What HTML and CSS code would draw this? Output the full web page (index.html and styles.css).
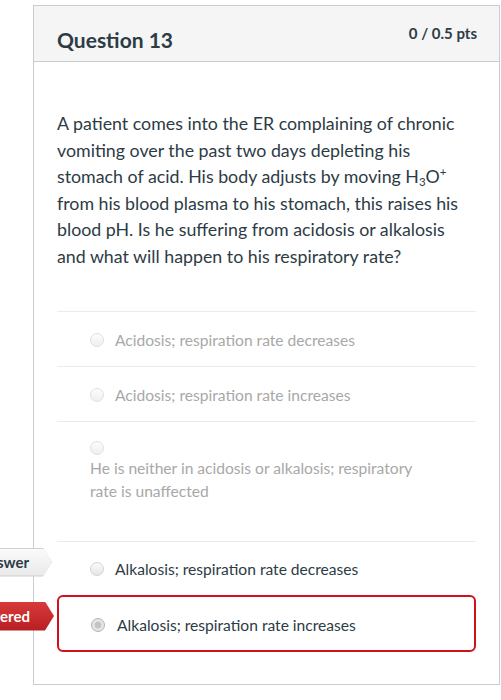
FILE: index.html
```html
<!DOCTYPE html>
<html lang="en">
  <head>
    <meta charset="UTF-8" />
    <meta name="viewport" content="width=device-width, initial-scale=1.0" />
    <title>Question 13</title>
    <link rel="stylesheet" href="styles.css">
  </head>
  <body>
    <div class="page">
      <div class="card">
        <div class="header">
          <h2 class="title">Question 13</h2>
          <div class="points">0 / 0.5 pts</div>
        </div>
        <div class="body">
          <p class="question">
            A patient comes into the ER complaining of chronic vomiting over the past two days depleting his
            stomach of acid. His body adjusts by moving H<sub>3</sub>O<sup>+</sup> from his blood plasma to his
            stomach, this raises his blood pH. Is he suffering from acidosis or alkalosis and what will happen
            to his respiratory rate?
          </p>
          <div class="answers">
            <div class="answer muted">
              <span class="radio"></span>
              <span class="text">Acidosis; respiration rate decreases</span>
            </div>
            <div class="answer muted">
              <span class="radio"></span>
              <span class="text">Acidosis; respiration rate increases</span>
            </div>
            <div class="answer muted stacked">
              <span class="radio"></span>
              <span class="text">He is neither in acidosis or alkalosis; respiratory rate is unaffected</span>
            </div>
            <div class="answer correct">
              <span class="tag tag-grey"><span>Correct Answer</span></span>
              <span class="radio"></span>
              <span class="text">Alkalosis; respiration rate decreases</span>
            </div>
            <div class="answer chosen">
              <span class="tag tag-red"><span>You Answered</span></span>
              <span class="radio checked"></span>
              <span class="text">Alkalosis; respiration rate increases</span>
            </div>
          </div>
        </div>
      </div>
    </div>
  </body>
</html>
```

FILE: styles.css
```css
* {
  padding: 0;
  margin: 0;
  box-sizing: border-box;
}
html,
body {
  width: 100%;
  height: 100%;
  overflow: hidden;
  background: #fff;
}
body {
  font-family: Lato, "Open Sans", "Liberation Sans", sans-serif;
  color: #2d3b45;
}
.page {
  padding: 5px 0 0 33px;
}
.card {
  width: 467px;
  border: 1px solid #c7cdd1;
}
.header {
  display: flex;
  justify-content: space-between;
  height: 56px;
  padding: 0 22px 0 23px;
  background: #f5f5f5;
  border-bottom: 1px solid #c7cdd1;
}
.title {
  font-size: 21px;
  font-weight: 700;
  line-height: 26px;
  padding-top: 21px;
}
.points {
  font-size: 15px;
  font-weight: 700;
  line-height: 18px;
  padding-top: 18px;
}
.body {
  padding: 48px 23px 32px 23px;
}
.question {
  font-size: 17.8px;
  line-height: 26.6px;
}
.question sub {
  font-size: 11.5px;
  line-height: 0;
  vertical-align: -3px;
}
.question sup {
  font-size: 11.5px;
  line-height: 0;
  vertical-align: 7px;
}
.answers {
  margin-top: 41px;
}
.answer {
  position: relative;
  display: flex;
  align-items: center;
  font-size: 15.6px;
  line-height: 20px;
  padding: 18px 0 16px 33px;
  border-top: 1px solid #ebebeb;
}
.answer .radio {
  flex: none;
  width: 14px;
  height: 14px;
  margin-right: 11px;
  border-radius: 50%;
  border: 1px solid #d4d4d4;
  background: linear-gradient(#fafafa, #e6e6e6);
}
.muted {
  color: #a8a8a8;
}
.muted .radio {
  border-color: #e0e0e0;
  background: linear-gradient(#fdfdfd, #efefef);
}
.stacked {
  display: block;
  padding: 19px 0 38px 33px;
  line-height: 23px;
}
.stacked .radio {
  display: block;
  margin-bottom: 2px;
}
.stacked .text {
  display: block;
  max-width: 340px;
}
.correct {
  padding: 17px 0 16px 33px;
}
.chosen {
  border: 2px solid #d0101b;
  border-radius: 6px;
  padding: 18px 0 15px 32px;
}
.radio.checked {
  margin-right: 12px;
  border: 1px solid #b4b4b4;
  background: radial-gradient(circle, #c4c4c4 0, #c4c4c4 3px, #e9e9e9 4px, #d9d9d9 100%);
}
.tag {
  position: absolute;
  right: calc(100% + 5px);
  height: 29px;
  padding-right: 9px;
  clip-path: polygon(0 0, calc(100% - 9px) 0, 100% 50%, calc(100% - 9px) 100%, 0 100%);
  white-space: nowrap;
}
.tag span {
  display: block;
  height: 100%;
  padding: 0 13px 0 12px;
  font-size: 15px;
  font-weight: 700;
  line-height: 29px;
}
.tag-grey {
  top: 6px;
  background: #cfcfcf;
  padding: 1px 10px 1px 0;
}
.tag-grey span {
  height: 27px;
  line-height: 27px;
  color: #2d3b45;
  background: linear-gradient(#fbfbfb, #e9e9e9);
  clip-path: polygon(0 0, 100% 0, calc(100% + 8px) 50%, 100% 100%, 0 100%);
  margin-right: -9px;
  padding-right: 22px;
}
.tag-red {
  top: 5px;
  background: linear-gradient(#d83a3a, #b81e22);
}
.tag-red span {
  color: #fff;
  padding-right: 15px;
}
```
